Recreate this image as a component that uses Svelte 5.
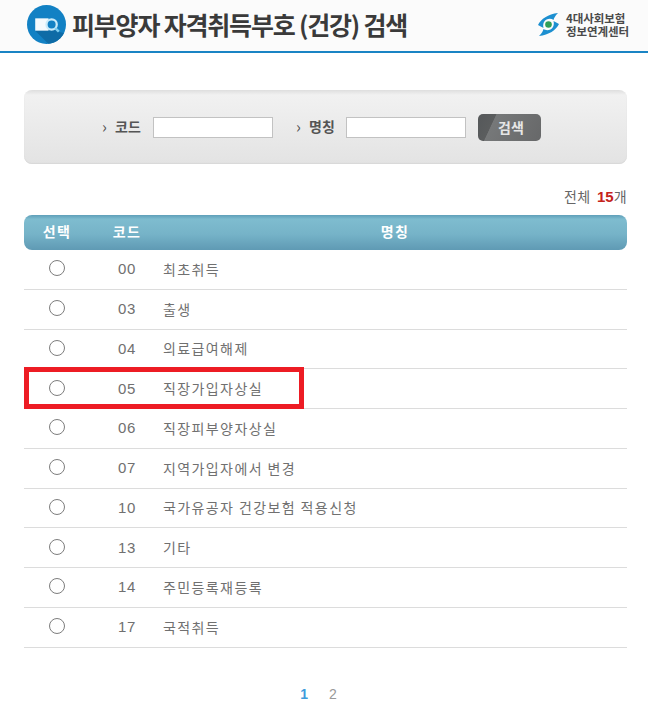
<script>
  const rows = [
    ['00', '최초취득'],
    ['03', '출생'],
    ['04', '의료급여해제'],
    ['05', '직장가입자상실'],
    ['06', '직장피부양자상실'],
    ['07', '지역가입자에서 변경'],
    ['10', '국가유공자 건강보험 적용신청'],
    ['13', '기타'],
    ['14', '주민등록재등록'],
    ['17', '국적취득']
  ];
</script>

<div class="page">
  <header class="top">
    <div class="title">
      <svg class="title-icon" width="39" height="39" viewBox="0 0 38 38">
        <defs>
          <clipPath id="disc"><circle cx="19" cy="19" r="19" /></clipPath>
        </defs>
        <circle cx="19" cy="19" r="19" fill="#1281c4" />
        <path d="M8 25 L21 38 H38 V28 L31 26 L28 23 Z" fill="#0e6ba6" clip-path="url(#disc)" />
        <rect x="8" y="13" width="13" height="12" fill="#f4fafd" />
        <circle cx="24" cy="19" r="5" fill="#1281c4" stroke="#c9ebfa" stroke-width="2.2" />
        <path d="M27.5 22.5 L31 26" stroke="#7ecdf0" stroke-width="2.4" />
      </svg>
      <h1>피부양자 자격취득부호 (건강) 검색</h1>
    </div>
    <div class="org">
      <svg width="22" height="23" viewBox="0 0 22 23">
        <path d="M0 12 C3 6 10 1 20 0 C17 3 16 5 15.5 7 C13 5 8 5.5 6 9 C5 11 5 13 5.5 15 Z" fill="#1c8fd0" />
        <path d="M0 12 C3 6 10 1 20 0 C17 3 16 5 15.5 7 C13 5 8 5.5 6 9 C5 11 5 13 5.5 15 Z" fill="#1c8fd0" transform="rotate(180 10.5 11.5)" />
        <circle cx="10.5" cy="11.5" r="3.3" fill="#2f9e58" />
      </svg>
      <div class="org-name">4대사회보험<br />정보연계센터</div>
    </div>
  </header>

  <main class="body">
    <form class="search" on:submit|preventDefault>
      <span class="chev">›</span>
      <label for="code">코드</label>
      <input id="code" type="text" />
      <span class="chev second">›</span>
      <label for="name">명칭</label>
      <input id="name" type="text" />
      <button type="submit">검색</button>
    </form>

    <p class="total">전체 <b>15</b>개</p>

    <div class="thead">
      <span class="c-sel">선택</span>
      <span class="c-code">코드</span>
      <span class="c-name">명칭</span>
    </div>

    {#each rows as [code, name]}
      <div class="row">
        <span class="c-sel"><span class="radio"></span></span>
        <span class="c-code">{code}</span>
        <span class="c-name">{name}</span>
        {#if code === '05'}<span class="mark"></span>{/if}
      </div>
    {/each}

    <nav class="pager">
      <span class="on">1</span>
      <span>2</span>
    </nav>
  </main>
</div>

<style>
  :global(body) {
    margin: 0;
    background: #fff;
  }

  .page {
    width: 648px;
    height: 714px;
    overflow: hidden;
    font-family: "Noto Sans CJK KR", "Liberation Sans", sans-serif;
  }

  /* top bar */
  .top {
    height: 51px;
    box-sizing: content-box;
    display: flex;
    align-items: center;
    justify-content: space-between;
    padding: 0 19px 0 27px;
    background: #fbfbfb;
    border-bottom: 2px solid #1a84c4;
  }
  .title {
    display: flex;
    align-items: center;
    gap: 6px;
  }
  .title-icon { margin-top: -3px; }
  h1 {
    margin: -3px 0 0;
    font-size: 25px;
    font-weight: 700;
    letter-spacing: -1.2px;
    color: #3a3a3a;
  }
  .org {
    display: flex;
    align-items: center;
    gap: 6px;
    margin-top: -2px;
  }
  .org-name {
    font-size: 11.5px;
    font-weight: 700;
    line-height: 12.5px;
    letter-spacing: -0.1px;
    color: #4a4a4a;
  }

  .body {
    position: relative;
    padding: 37px 21px 0 24px;
  }

  /* search box */
  .search {
    height: 74px;
    box-sizing: border-box;
    display: flex;
    align-items: center;
    padding: 0 0 0 78px;
    border-radius: 8px;
    background: linear-gradient(#dedede 0, #f1f1f1 5px, #e3e3e3 100%);
    box-shadow: inset 0 -1px 1px #d8d8d8;
  }
  .chev {
    width: 13px;
    font-size: 16px;
    color: #555;
    margin-top: -3px;
  }
  .chev.second { margin-left: 23px; }
  label {
    width: 38px;
    font-size: 14px;
    font-weight: 700;
    color: #555;
    margin-top: -2px;
  }
  input {
    width: 120px;
    height: 21px;
    box-sizing: border-box;
    padding: 0 4px;
    border: 1px solid #c2c2c2;
    background: #fff;
  }
  #name { margin-left: -1px; }
  button {
    width: 63px;
    height: 27px;
    margin-left: 12px;
    padding: 0 0 0 3px;
    border: 0;
    border-radius: 5px;
    background: linear-gradient(115deg, #55585a 0, #5b5d5e 24%, #767879 25%, #676869 100%);
    color: #e6e6e6;
    font-family: inherit;
    font-size: 14px;
    font-weight: 700;
  }

  .total {
    margin: 22px 0 9px;
    height: 20px;
    line-height: 20px;
    text-align: right;
    font-size: 14px;
    letter-spacing: 0.4px;
    color: #666;
  }
  .total b {
    margin-left: 3px;
    color: #c5231b;
    font-family: "Liberation Sans", sans-serif;
    font-size: 15px;
    letter-spacing: 0;
  }

  /* table */
  .thead {
    height: 35px;
    display: flex;
    align-items: center;
    border-radius: 8px;
    background: linear-gradient(#5f9fb9 0, #7ebccf 12%, #76b3c8 55%, #5f9ab4 100%);
    color: #fff;
    font-size: 14px;
    font-weight: 700;
    letter-spacing: 1.4px;
  }
  .thead .c-name { text-align: center; }
  .thead span { margin-top: -4px; }

  .row {
    position: relative;
    height: 39.75px;
    box-sizing: border-box;
    display: flex;
    align-items: center;
    border-bottom: 1px solid #dcdcdc;
    color: #707070;
    font-size: 14px;
    letter-spacing: 1.4px;
  }
  .c-sel {
    width: 66px;
    flex: none;
    display: flex;
    justify-content: center;
  }
  .c-code {
    width: 74px;
    flex: none;
    text-align: center;
  }
  .c-name {
    flex: 1;
    margin-left: -1px;
  }
  .row .c-code {
    font-family: "Liberation Sans", sans-serif;
    font-size: 15px;
    letter-spacing: 0.6px;
    font-weight: 400;
  }
  .row span { margin-top: -1px; }
  .row .c-sel { margin-top: -2px; }
  .row .radio {
    width: 16px;
    height: 16px;
    margin: 0;
    box-sizing: border-box;
    border: 1.5px solid #7d7d7d;
    border-radius: 50%;
    background: #fff;
  }
  .row .mark {
    position: absolute;
    left: 0;
    top: -2px;
    width: 280px;
    height: 42px;
    margin: 0;
    box-sizing: border-box;
    border: 5px solid #ed1c24;
  }

  .pager {
    margin-top: 38px;
    display: flex;
    justify-content: center;
    gap: 21px;
    padding-right: 14px;
    font-family: "Liberation Sans", sans-serif;
    font-size: 14px;
    color: #999;
  }
  .pager .on {
    color: #3f9bdc;
    font-weight: 700;
  }
</style>
